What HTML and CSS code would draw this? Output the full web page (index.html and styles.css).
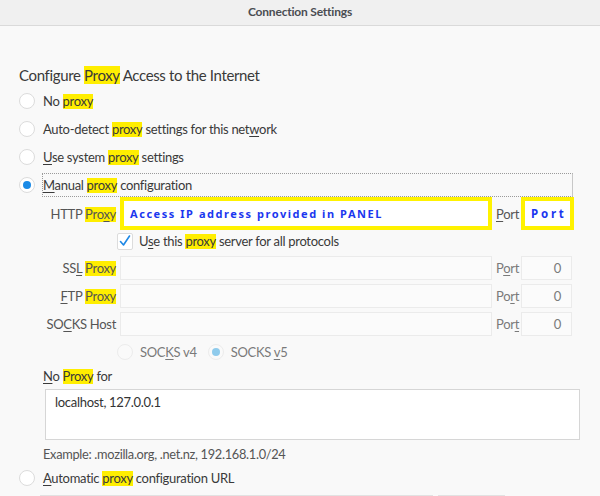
FILE: index.html
```html
<!DOCTYPE html>
<html>
<head>
<meta charset="utf-8">
<title>Connection Settings</title>
<link rel="stylesheet" href="styles.css">
</head>
<body>
<div class="titlebar">Connection Settings</div>
<div class="content">
  <div class="heading">Configure <span class="hl hl-big">Proxy</span> Access to the Internet</div>

  <div class="opt"><span class="radio"></span><span class="lab">No <span class="hl">proxy</span></span></div>
  <div class="opt"><span class="radio"></span><span class="lab">Auto-detect <span class="hl">proxy</span> settings for this net<u>w</u>ork</span></div>
  <div class="opt"><span class="radio"></span><span class="lab"><u>U</u>se system <span class="hl">proxy</span> settings</span></div>
  <div class="opt manual"><span class="radio on"></span><span class="lab"><u>M</u>anual <span class="hl">proxy</span> configuration</span></div>

  <div class="row http">
    <span class="lbl">HTTP <span class="hl">Pro<u>x</u>y</span></span>
    <span class="field hy">Access IP address provided in PANEL</span>
    <span class="plbl"><u>P</u>ort</span>
    <span class="port hy">Port</span>
  </div>

  <div class="check-row">
    <span class="checkbox"><svg width="14" height="14" viewBox="0 0 14 14"><path d="M2.5 7.5 L5.5 11 L11.5 2" fill="none" stroke="#1e88e5" stroke-width="1.6" stroke-linecap="round" stroke-linejoin="round"/></svg></span>
    <span class="clab">U<u>s</u>e this <span class="hl">proxy</span> server for all protocols</span>
  </div>

  <div class="row">
    <span class="lbl">SS<u>L</u> <span class="hl">Proxy</span></span>
    <span class="field dis"></span>
    <span class="plbl dim">P<u>o</u>rt</span>
    <span class="port dis">0</span>
  </div>
  <div class="row">
    <span class="lbl"><u>F</u>TP <span class="hl">Proxy</span></span>
    <span class="field dis"></span>
    <span class="plbl dim">Po<u>r</u>t</span>
    <span class="port dis">0</span>
  </div>
  <div class="row">
    <span class="lbl">SO<u>C</u>KS Host</span>
    <span class="field dis"></span>
    <span class="plbl dim">Por<u>t</u></span>
    <span class="port dis">0</span>
  </div>

  <div class="socks-row">
    <span class="radio dis"></span><span class="slab">SOC<u>K</u>S v4</span>
    <span class="radio dis on-dis"></span><span class="slab">SOCKS <u>v</u>5</span>
  </div>

  <div class="noproxy"><u>N</u>o <span class="hl">Proxy</span> for</div>
  <div class="textarea">localhost, 127.0.0.1</div>
  <div class="example">Example: .mozilla.org, .net.nz, 192.168.1.0/24</div>

  <div class="opt"><span class="radio"></span><span class="lab"><u>A</u>utomatic <span class="hl">proxy</span> configuration URL</span></div>

  <div class="bottom-row">
    <span class="url-field"></span>
    <span class="reload-btn"></span>
  </div>
</div>
</body>
</html>
```

FILE: styles.css
```css
html, body {
  margin: 0;
  padding: 0;
}
body {
  width: 600px;
  height: 496px;
  overflow: hidden;
  background: #f9f9f9;
  font-family: Lato, "Noto Sans", sans-serif;
  color: #3a3a3a;
  letter-spacing: -0.3px;
}
u {
  text-decoration: underline;
  text-underline-offset: 2px;
}
.titlebar {
  height: 25px;
  line-height: 24px;
  background: #f0f0f0;
  border-bottom: 1px solid #dadada;
  text-align: center;
  font-size: 12px;
  font-weight: bold;
  letter-spacing: -0.2px;
  color: #4a4d52;
}
.content {
  padding-left: 19px;
}
.heading {
  margin-top: 39px;
  margin-bottom: 2px;
  height: 20px;
  line-height: 20px;
  font-size: 15px;
  letter-spacing: -0.35px;
  color: #3a3a3a;
}
.hl {
  display: inline-block;
  background: #ffee00;
  line-height: 15px;
}
.hl-big {
  line-height: 18px;
}
.opt {
  display: flex;
  align-items: center;
  height: 28px;
}
.radio {
  flex: none;
  position: relative;
  width: 16px;
  height: 16px;
  box-sizing: border-box;
  border: 1px solid #dcdcdc;
  border-radius: 50%;
  background: #fff;
}
.radio.on::after {
  content: "";
  position: absolute;
  left: 3px;
  top: 3px;
  width: 8px;
  height: 8px;
  border-radius: 50%;
  background: #1a8ae6;
}
.radio.dis {
  background: #fafafa;
  border-color: #ececec;
}
.radio.on-dis::after {
  content: "";
  position: absolute;
  left: 3px;
  top: 3px;
  width: 8px;
  height: 8px;
  border-radius: 50%;
  background: #8fcbec;
}
.lab {
  margin-left: 7px;
  border: 1px solid transparent;
  font-size: 13px;
  line-height: 22px;
  height: 22px;
}
.manual .lab {
  width: 531px;
  box-sizing: border-box;
  height: 24px;
  border: 1px dotted #9a9a9a;
  border-right-style: solid;
  border-right-color: #c8c8c8;
}
.row {
  display: flex;
  align-items: center;
  height: 24px;
  margin-bottom: 4px;
}
.row.http {
  margin-top: -2px;
  height: 33px;
  margin-bottom: 0;
}
.lbl {
  width: 97px;
  margin-right: 4px;
  text-align: right;
  font-size: 13px;
  color: #555;
  flex: none;
}
.field {
  flex: none;
  width: 372px;
  height: 24px;
  box-sizing: border-box;
}
.field.dis {
  border: 1px solid #ebebeb;
  background: #fbfbfb;
}
.hy {
  height: 33px;
  border: 4px solid #fff200;
  background: #fff;
  color: #1b37ef;
  font-family: "Noto Sans", sans-serif;
  font-weight: bold;
  font-size: 11px;
  letter-spacing: 1.55px;
  line-height: 25px;
  padding-left: 6px;
  white-space: nowrap;
  overflow: hidden;
}
.plbl {
  flex: none;
  width: 29px;
  box-sizing: border-box;
  padding-left: 4px;
  font-size: 13px;
  color: #555;
}
.plbl.dim {
  color: #7a7a7a;
}
.port {
  flex: none;
  box-sizing: border-box;
}
.port.hy {
  width: 53px;
  padding-left: 6px;
  font-size: 11.5px;
  letter-spacing: 2.8px;
}
.port.dis {
  width: 51px;
  height: 24px;
  border: 1px solid #ebebeb;
  background: #fbfbfb;
  text-align: right;
  padding-right: 10px;
  font-size: 13px;
  line-height: 22px;
  color: #7a7a7a;
}
.check-row {
  display: flex;
  align-items: center;
  height: 22px;
  margin-bottom: 4px;
  padding-left: 98px;
}
.checkbox {
  flex: none;
  width: 16px;
  height: 17px;
  box-sizing: border-box;
  border: 1px solid #dcdcdc;
  border-radius: 2px;
  background: #fff;
  display: flex;
  align-items: center;
  justify-content: center;
}
.clab {
  margin-left: 6px;
  font-size: 13px;
}
.socks-row {
  display: flex;
  align-items: center;
  height: 24px;
  padding-left: 98px;
}
.slab {
  margin-left: 7px;
  margin-right: 11px;
  font-size: 13px;
  color: #7a7a7a;
}
.noproxy {
  height: 24px;
  line-height: 24px;
  margin-left: 24px;
  font-size: 13px;
}
.textarea {
  margin-top: 1px;
  margin-left: 26px;
  width: 535px;
  height: 51px;
  box-sizing: border-box;
  border: 1px solid #d6d6d6;
  background: #fff;
  padding: 3px 9px;
  font-size: 13px;
  line-height: 18px;
  color: #333;
}
.example {
  margin-top: 4px;
  margin-left: 24px;
  height: 20px;
  line-height: 20px;
  font-size: 12.8px;
  color: #555;
}
.bottom-row {
  display: flex;
  margin-top: 3px;
  margin-left: 21px;
  gap: 5px;
}
.url-field {
  width: 393px;
  height: 20px;
  border: 1px solid #e2e2e2;
  box-sizing: border-box;
  background: #fbfbfb;
}
.reload-btn {
  width: 67px;
  height: 20px;
  border: 1px solid #e2e2e2;
  box-sizing: border-box;
  background: #fbfbfb;
}
```
